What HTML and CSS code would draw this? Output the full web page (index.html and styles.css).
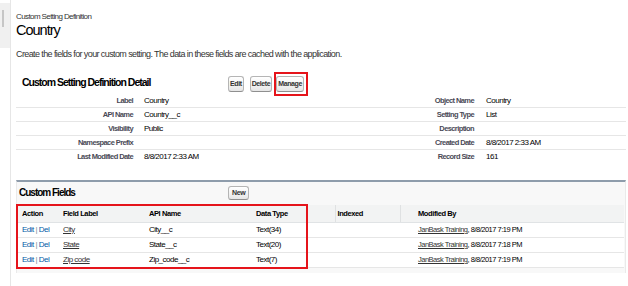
FILE: index.html
```html
<!DOCTYPE html>
<html lang="en">
<head>
<meta charset="utf-8">
<title>Country | Custom Setting Definition</title>
<link rel="stylesheet" href="styles.css">
</head>
<body>
<div class="app">
  <aside class="rail">
    <div class="rail-tab"><span class="rail-grip"></span></div>
  </aside>
  <main class="main">
    <div class="crumb">Custom Setting Definition</div>
    <h1 class="title">Country</h1>
    <p class="desc">Create the fields for your custom setting. The data in these fields are cached with the application.</p>

    <section class="detail">
      <div class="detail-head">
        <h2 class="block-title">Custom Setting Definition Detail</h2>
        <div class="btns">
          <button class="btn btn-edit">Edit</button>
          <button class="btn btn-delete">Delete</button>
          <span class="marked"><button class="btn btn-manage">Manage</button></span>
        </div>
      </div>
      <div class="props">
        <div class="prow"><span class="lbl">Label</span><span class="val">Country</span><span class="lbl">Object Name</span><span class="val">Country</span></div>
        <div class="prow"><span class="lbl">API Name</span><span class="val">Country__c</span><span class="lbl">Setting Type</span><span class="val">List</span></div>
        <div class="prow"><span class="lbl">Visibility</span><span class="val">Public</span><span class="lbl">Description</span><span class="val"></span></div>
        <div class="prow"><span class="lbl">Namespace Prefix</span><span class="val"></span><span class="lbl">Created Date</span><span class="val">8/8/2017 2:33 AM</span></div>
        <div class="prow"><span class="lbl">Last Modified Date</span><span class="val">8/8/2017 2:33 AM</span><span class="lbl">Record Size</span><span class="val">161</span></div>
      </div>
    </section>

    <section class="fields">
      <div class="fields-head">
        <h2 class="fields-title">Custom Fields</h2>
        <button class="btn btn-new">New</button>
      </div>
      <table class="ftable">
        <colgroup>
          <col class="c-act"><col class="c-label"><col class="c-api"><col class="c-type"><col class="c-idx"><col class="c-blank"><col class="c-mod">
        </colgroup>
        <thead>
          <tr><th>Action</th><th>Field Label</th><th>API Name</th><th>Data Type</th><th class="sep">Indexed</th><th class="sep"></th><th>Modified By</th></tr>
        </thead>
        <tbody>
          <tr><td class="act"><a href="#">Edit</a> <span class="bar">|</span> <a href="#">Del</a></td><td><a class="ul" href="#">City</a></td><td>City__c</td><td>Text(34)</td><td></td><td></td><td class="mod"><a class="ul" href="#">JanBask Training</a>, 8/8/2017 7:19 PM</td></tr>
          <tr><td class="act"><a href="#">Edit</a> <span class="bar">|</span> <a href="#">Del</a></td><td><a class="ul" href="#">State</a></td><td>State__c</td><td>Text(20)</td><td></td><td></td><td class="mod"><a class="ul" href="#">JanBask Training</a>, 8/8/2017 7:18 PM</td></tr>
          <tr><td class="act"><a href="#">Edit</a> <span class="bar">|</span> <a href="#">Del</a></td><td><a class="ul" href="#">Zip code</a></td><td>Zip_code__c</td><td>Text(7)</td><td></td><td></td><td class="mod"><a class="ul" href="#">JanBask Training</a>, 8/8/2017 7:19 PM</td></tr>
        </tbody>
      </table>
      <div class="table-mark"></div>
    </section>
  </main>
</div>
</body>
</html>
```

FILE: styles.css
```css
* { box-sizing: border-box; }

body {
  margin: 0;
  background: #fff;
  color: #000;
  font-family: "Liberation Sans", Arial, sans-serif;
}

.app {
  display: flex;
  min-height: 286px;
}

.rail {
  flex: none;
  width: 11px;
  border-right: 1px solid #e6e6e6;
}

.rail-tab {
  margin-top: 3px;
  height: 45px;
  padding: 7px 0 0 2px;
  background: #f0f0f0;
}

.rail-grip {
  display: block;
  width: 2px;
  height: 17px;
  background: #c6c6c6;
}

.main {
  flex: 1;
  min-width: 0;
  padding: 0 2px 0 5px;
}

.crumb {
  margin-top: 12px;
  font-size: 8px;
  line-height: 10px;
  letter-spacing: -0.6px;
  color: #333;
}

.title {
  margin: 0;
  font-size: 14.5px;
  line-height: 17px;
  letter-spacing: -1px;
  font-weight: normal;
  color: #000;
}

.desc {
  margin: 10px 0 0;
  font-size: 9px;
  line-height: 11px;
  letter-spacing: -0.6px;
  color: #333;
}

.detail {
  margin-top: 16px;
}

.detail-head {
  display: flex;
  align-items: flex-start;
  height: 16px;
  padding-left: 6px;
}

.block-title {
  flex: none;
  width: 206px;
  margin: 0;
  font-size: 10.5px;
  line-height: 12px;
  letter-spacing: -1px;
  font-weight: bold;
}

.btns {
  display: flex;
  align-items: flex-start;
  gap: 4px;
}

.btn {
  height: 16px;
  padding: 0 1px;
  border: 1px solid #b5b5b5;
  border-bottom-color: #8f8f8f;
  border-radius: 3px;
  background: linear-gradient(#ffffff, #f1f1f1 60%, #e6e6e6);
  color: #333;
  font-family: inherit;
  font-size: 7px;
  font-weight: bold;
  line-height: 14px;
  letter-spacing: -0.4px;
  cursor: pointer;
}

.btn-edit { margin-right: 2px; }

.marked {
  position: relative;
  display: inline-flex;
}

.marked::after {
  content: "";
  position: absolute;
  top: -4px;
  right: -4px;
  bottom: -4px;
  left: -2px;
  border: 2px solid #e5141b;
  pointer-events: none;
}

.props {
  margin-top: 2px;
}

.prow {
  display: grid;
  grid-template-columns: 122px 242px 99px 1fr;
  height: 14px;
  border-bottom: 1px solid #e6e6e6;
  line-height: 13px;
}

.prow:last-child {
  border-bottom: none;
}

.lbl {
  padding-right: 5px;
  text-align: right;
  font-size: 7.5px;
  font-weight: bold;
  letter-spacing: -0.6px;
  color: #4a4a56;
}

.val {
  padding-left: 6px;
  font-size: 8px;
  letter-spacing: -0.5px;
  color: #000;
}

.prow .val:last-child {
  padding-left: 7px;
}

.fields {
  position: relative;
  margin-top: 16px;
  padding-bottom: 5px;
  background: #f8f8f8;
  border-top: 2px solid #8e9cab;
  border-left: 1px solid #eaeaea;
  border-right: 1px solid #eaeaea;
}

.fields-head {
  display: flex;
  align-items: center;
  height: 23px;
  padding: 0 0 2px 2px;
}

.fields-title {
  flex: none;
  width: 209px;
  margin: 0;
  font-size: 10px;
  letter-spacing: -1px;
  font-weight: bold;
}

.btn-new {
  height: 14px;
  line-height: 12px;
  padding: 0 3px;
}

.ftable {
  width: calc(100% - 2px);
  margin: 0 1px;
  border-collapse: collapse;
  table-layout: fixed;
}

.c-act { width: 41px; }
.c-label { width: 86px; }
.c-api { width: 107px; }
.c-type { width: 83px; }
.c-idx { width: 65px; }
.c-blank { width: 14px; }

.ftable th {
  height: 17px;
  padding: 0 0 0 4px;
  background: #f2f3f3;
  border-bottom: 1px solid #e0e3e5;
  text-align: left;
  font-size: 7.5px;
  font-weight: bold;
  letter-spacing: -0.4px;
  color: #000;
}

.ftable th.sep {
  padding-left: 2px;
  border-left: 1px solid #dfe1e2;
}

.ftable td {
  height: 15px;
  padding: 0 0 0 4px;
  background: #fff;
  border-bottom: 1px solid #e6e6e6;
  font-size: 8px;
  letter-spacing: -0.5px;
  color: #000;
  white-space: nowrap;
}

.ftable td.mod {
  font-size: 7.5px;
  letter-spacing: -0.5px;
}

.act a {
  color: #015ba7;
  text-decoration: none;
}

.act .bar {
  color: #7d8b9a;
}

.ul {
  color: #333;
  text-decoration: underline;
}

.table-mark {
  position: absolute;
  top: 22px;
  left: -1px;
  width: 292px;
  height: 65px;
  border: 2px solid #e5141b;
  pointer-events: none;
}
```
